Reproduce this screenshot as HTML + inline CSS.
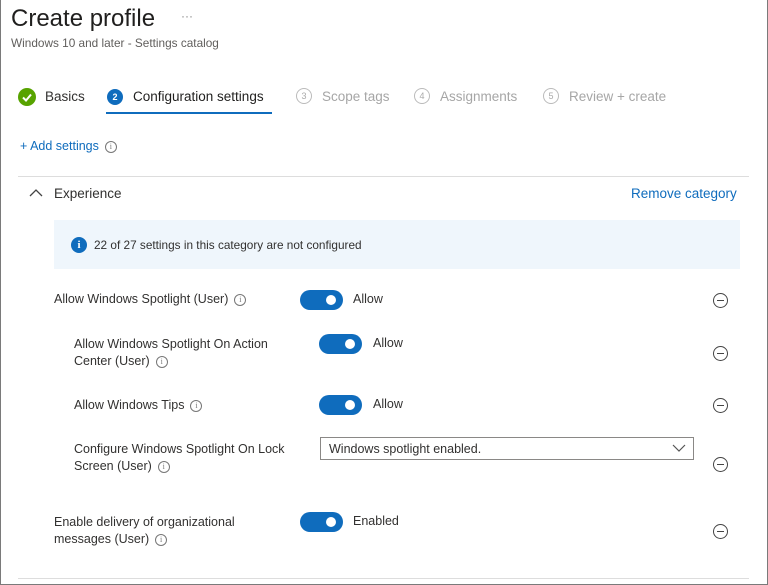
<!DOCTYPE html>
<html><head><meta charset="utf-8"><style>
*{margin:0;padding:0;box-sizing:border-box}
body{width:768px;height:585px;overflow:hidden;background:#fff;font-family:"Liberation Sans",sans-serif;color:#323130;position:relative}
.frame{position:absolute;left:0;top:0;width:768px;height:585px;border:1px solid #7a7a7a;border-top:none}
.a{position:absolute;white-space:nowrap}
.t{font-size:12.5px}
.tg{position:absolute;width:43px;height:20px;border-radius:10px;background:#0f6cbd}
.tg::after{content:"";position:absolute;right:7px;top:5px;width:10px;height:10px;border-radius:50%;background:#fff}
.i{display:inline-block;width:12px;height:12px;border:1px solid #777;border-radius:50%;font-size:8px;line-height:10px;text-align:center;color:#777;vertical-align:middle;margin-left:6px;font-family:"Liberation Serif",serif}
.m{position:absolute;width:15px;height:15px;border:1.3px solid #444;border-radius:50%}
.m::after{content:"";position:absolute;left:3px;right:3px;top:6px;height:1.3px;background:#444}
.sc{position:absolute;width:16px;height:16px;border:1px solid #bbb;border-radius:50%;font-size:9px;line-height:14px;text-align:center;color:#aaa}
.st{font-size:13.5px;color:#a6a6a6}
</style></head><body>
<div class="frame"></div>
<div class="a" style="left:11px;top:5px;font-size:24px;color:#201f1e">Create profile</div>
<div class="a" style="left:181px;top:9px;font-size:12px;color:#888">···</div>
<div class="a" style="left:11px;top:36px;font-size:11.8px;color:#605e5c">Windows 10 and later - Settings catalog</div>

<div class="a" style="left:18px;top:88px;width:18px;height:18px;border-radius:50%;background:#57a300"><svg width="18" height="18"><path d="M5 9.5l3 3 5-6" stroke="#fff" stroke-width="2" fill="none"/></svg></div>
<div class="a" style="left:45px;top:89px;font-size:13.5px">Basics</div>
<div class="a" style="left:107px;top:89px;width:16px;height:16px;border-radius:50%;background:#0f6cbd;color:#fff;font-size:9px;line-height:16px;text-align:center;font-weight:bold">2</div>
<div class="a" style="left:133px;top:89px;font-size:13.5px;color:#201f1e">Configuration settings</div>
<div class="a" style="left:106px;top:112px;width:166px;height:2px;background:#0f6cbd"></div>
<div class="sc" style="left:296px;top:88px">3</div><div class="a st" style="left:322px;top:89px">Scope tags</div>
<div class="sc" style="left:414px;top:88px">4</div><div class="a st" style="left:440px;top:89px">Assignments</div>
<div class="sc" style="left:543px;top:88px">5</div><div class="a st" style="left:569px;top:89px">Review + create</div>

<div class="a" style="left:20px;top:139px;font-size:12.5px;color:#0f6cbd">+ Add settings<span class="i">i</span></div>
<div class="a" style="left:18px;top:176px;width:731px;height:1px;background:#ddd"></div>
<svg class="a" style="left:29px;top:188px" width="14" height="10"><path d="M1 8l6-6 6 6" stroke="#444" stroke-width="1.3" fill="none"/></svg>
<div class="a" style="left:54px;top:186px;font-size:13.5px">Experience</div>
<div class="a" style="left:631px;top:186px;font-size:13.5px;color:#0f6cbd">Remove category</div>

<div class="a" style="left:54px;top:220px;width:686px;height:49px;background:#eff6fc"></div>
<div class="a" style="left:71px;top:237px;width:16px;height:16px;border-radius:50%;background:#0f6cbd;color:#fff;font-size:11px;line-height:16px;text-align:center;font-weight:bold;font-family:'Liberation Serif',serif">i</div>
<div class="a" style="left:94px;top:238px;font-size:11.8px">22 of 27 settings in this category are not configured</div>

<div class="a t" style="left:54px;top:292px">Allow Windows Spotlight (User)<span class="i">i</span></div>
<div class="tg" style="left:300px;top:290px"></div><div class="a t" style="left:353px;top:292px">Allow</div>
<div class="m" style="left:713px;top:293px"></div>

<div class="a t" style="left:74px;top:336px;line-height:17px">Allow Windows Spotlight On Action<br>Center (User)<span class="i">i</span></div>
<div class="tg" style="left:319px;top:334px"></div><div class="a t" style="left:373px;top:336px">Allow</div>
<div class="m" style="left:713px;top:346px"></div>

<div class="a t" style="left:74px;top:398px">Allow Windows Tips<span class="i">i</span></div>
<div class="tg" style="left:319px;top:395px"></div><div class="a t" style="left:373px;top:397px">Allow</div>
<div class="m" style="left:713px;top:398px"></div>

<div class="a t" style="left:74px;top:441px;line-height:17px">Configure Windows Spotlight On Lock<br>Screen (User)<span class="i">i</span></div>
<div class="a" style="left:320px;top:437px;width:374px;height:23px;border:1px solid #8a8886;font-size:12.5px;padding:4px 8px">Windows spotlight enabled.</div>
<svg class="a" style="left:672px;top:444px" width="14" height="9"><path d="M1 1l6 6 6-6" stroke="#555" stroke-width="1.2" fill="none"/></svg>
<div class="m" style="left:713px;top:457px"></div>

<div class="a t" style="left:54px;top:514px;line-height:17px">Enable delivery of organizational<br>messages (User)<span class="i">i</span></div>
<div class="tg" style="left:300px;top:512px"></div><div class="a t" style="left:353px;top:514px">Enabled</div>
<div class="m" style="left:713px;top:524px"></div>

<div class="a" style="left:18px;top:578px;width:731px;height:1px;background:#ddd"></div>
</body></html>
